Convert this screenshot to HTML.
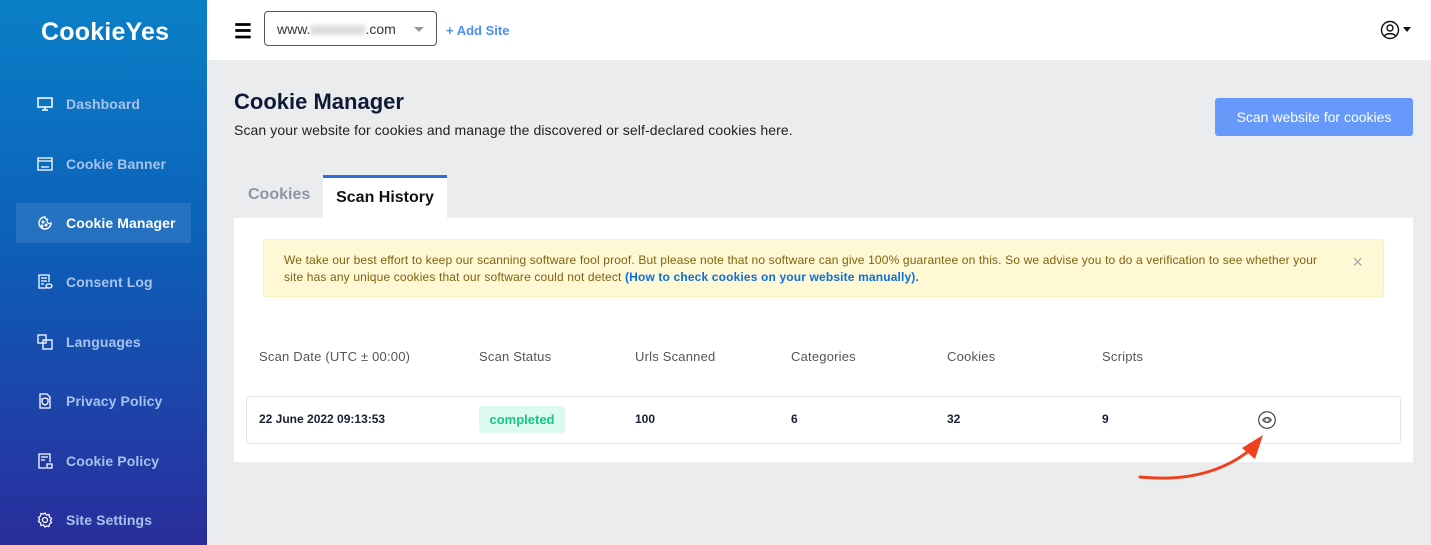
<!DOCTYPE html>
<html><head><meta charset="utf-8"><style>
*{box-sizing:border-box;margin:0;padding:0}
body{width:1431px;height:545px;overflow:hidden;font-family:"Liberation Sans",sans-serif;background:#ebecee;position:relative}
.sb{position:absolute;left:0;top:0;width:207px;height:545px;background:linear-gradient(180deg,#0a80c7 0%,#0d5fb8 45%,#2a2d9c 100%)}
.logo{position:absolute;left:41px;top:18px;color:#fff;font-weight:bold;font-size:25px;letter-spacing:0.2px}
.nav{position:absolute;left:37px;font-size:14px;color:#a6c3ee;display:flex;align-items:center;height:20px;font-weight:bold;letter-spacing:0.1px}
.nav svg{width:16px;height:16px;margin-right:13px}
.act{position:absolute;left:16px;top:203px;width:175px;height:40px;background:rgba(255,255,255,.1)}
.hdr{position:absolute;left:207px;top:0;right:0;height:60px;background:#fff}
.sel{position:absolute;left:264px;top:11px;width:173px;height:35px;border:1px solid #555;border-radius:4px;font-size:14px;color:#333;padding:9px 0 0 12px}
.blur{display:inline-block;width:55px;height:10px;background:#ddd;vertical-align:middle;filter:blur(2px)}
.t{position:absolute;white-space:nowrap}
.card{position:absolute;left:234px;top:218px;width:1179px;height:244px;background:#fff}
.tab{position:absolute;left:323px;top:175px;width:124px;height:43px;background:#fff;border-top:3px solid #2f6de1;font-size:16px;color:#111;text-align:center;padding-top:11px;font-weight:bold}
.alert{position:absolute;left:263px;top:239px;width:1121px;height:58px;background:#fff8d4;border:1px solid #fcefb8;border-radius:3px;font-size:12px;color:#7e6310;padding:12px 0 0 20px;line-height:17px;letter-spacing:0.15px}
.th{font-size:13px;color:#555;top:349px;letter-spacing:0.2px}
.row{position:absolute;left:246px;top:396px;width:1155px;height:48px;border:1px solid #e6e6e6;border-radius:4px}
.td{font-size:12px;font-weight:bold;color:#1a1f36;top:412px}
</style></head><body>
<div class="sb">
<div class="logo">CookieYes</div>
<div class="act"></div>
<div class="nav" style="top:94px"><svg viewBox="0 0 16 16" fill="none" stroke="#fff" stroke-width="1.5"><rect x="1" y="2" width="14" height="9"/><path d="M5 14h6M8 11v3"/></svg>Dashboard</div>
<div class="nav" style="top:154px"><svg viewBox="0 0 16 16" fill="none" stroke="#fff" stroke-width="1.3"><rect x="1" y="2" width="14" height="12"/><path d="M1 5h14M4 11h8"/></svg>Cookie Banner</div>
<div class="nav" style="top:213px;color:#fff"><svg viewBox="0 0 16 16" fill="none" stroke="#fff" stroke-width="1.4"><path d="M14 8a6 6 0 1 1-6-6 2 2 0 0 0 3 2 2 2 0 0 0 3 4z"/><circle cx="6" cy="7" r=".8" fill="#fff"/><circle cx="9" cy="10" r=".8" fill="#fff"/><circle cx="5" cy="11" r=".8" fill="#fff"/></svg>Cookie Manager</div>
<div class="nav" style="top:272px"><svg viewBox="0 0 16 16" fill="none" stroke="#fff" stroke-width="1.3"><path d="M10 14H2V1h10v7M4 4h6M4 7h6M4 10h3"/><ellipse cx="12" cy="12" rx="3" ry="2"/></svg>Consent Log</div>
<div class="nav" style="top:332px"><svg viewBox="0 0 16 16" fill="none" stroke="#fff" stroke-width="1.3"><rect x="1" y="1" width="8" height="8"/><rect x="6" y="6" width="9" height="9"/></svg>Languages</div>
<div class="nav" style="top:391px"><svg viewBox="0 0 16 16" fill="none" stroke="#fff" stroke-width="1.3"><path d="M3 1h7l3 3v11H3z"/><path d="M8 5l3 1v3c0 2-3 3-3 3s-3-1-3-3V6z"/></svg>Privacy Policy</div>
<div class="nav" style="top:451px"><svg viewBox="0 0 16 16" fill="none" stroke="#fff" stroke-width="1.3"><path d="M9 15H2V1h11v8M4 4h7M4 7h4"/><rect x="10" y="11" width="5" height="4"/></svg>Cookie Policy</div>
<div class="nav" style="top:510px"><svg viewBox="0 0 16 16" fill="none" stroke="#fff" stroke-width="1.3"><circle cx="8" cy="8" r="2.5"/><path d="M8 1l1.5 2 2.5-.5.5 2.5 2 1.5-1 2 1 2-2 1.5-.5 2.5-2.5-.5L8 15l-1.5-2-2.5.5-.5-2.5-2-1.5 1-2-1-2 2-1.5.5-2.5 2.5.5z"/></svg>Site Settings</div>
</div>
<div class="hdr"></div>
<div class="t" style="left:234px;top:19px;font-size:20px;font-weight:bold;color:#000">&#9776;</div>
<div class="sel">www.<span class="blur"></span>.com<span style="position:absolute;right:12px;top:15px;border:5px solid transparent;border-top-color:#999"></span></div>
<div class="t" style="left:446px;top:23px;font-size:13px;color:#4d8ff0;font-weight:bold">+ Add Site</div>
<svg style="position:absolute;left:1380px;top:20px" width="20" height="20" viewBox="0 0 20 20" fill="none" stroke="#111" stroke-width="1.4"><circle cx="10" cy="10" r="8.5"/><circle cx="10" cy="8" r="3"/><path d="M4.5 16c1.5-3 9.5-3 11 0"/></svg>
<div style="position:absolute;left:1403px;top:27px;border:4px solid transparent;border-top:5px solid #111"></div>
<div class="t" style="left:234px;top:89px;font-size:22px;font-weight:bold;color:#0e1a36">Cookie Manager</div>
<div class="t" style="left:234px;top:122px;font-size:14px;color:#222;letter-spacing:0.1px">Scan your website for cookies and manage the discovered or self-declared cookies here.</div>
<div class="t" style="left:1215px;top:98px;width:198px;height:38px;background:#6699fa;border-radius:3px;color:#fff;font-size:14px;text-align:center;line-height:38px">Scan website for cookies</div>
<div class="t" style="left:248px;top:186px;font-size:16px;color:#8e96a3;font-weight:bold">Cookies</div>
<div class="card"></div>
<div class="tab">Scan History</div>
<div class="alert">We take our best effort to keep our scanning software fool proof. But please note that no software can give 100% guarantee on this. So we advise you to do a verification to see whether your<br>site has any unique cookies that our software could not detect <span style="color:#0b6fe0;font-weight:bold">(How to check cookies on your website manually).</span><span style="position:absolute;right:20px;top:14px;font-size:18px;color:#aaa">×</span></div>
<div class="t th" style="left:259px">Scan Date (UTC ± 00:00)</div>
<div class="t th" style="left:479px">Scan Status</div>
<div class="t th" style="left:635px">Urls Scanned</div>
<div class="t th" style="left:791px">Categories</div>
<div class="t th" style="left:947px">Cookies</div>
<div class="t th" style="left:1102px">Scripts</div>
<div class="row"></div>
<div class="t td" style="left:259px">22 June 2022 09:13:53</div>
<div class="t" style="left:479px;top:406px;width:86px;height:27px;background:#dcfaf0;border-radius:3px;color:#14c784;font-size:13px;font-weight:bold;text-align:center;line-height:27px">completed</div>
<div class="t td" style="left:635px">100</div>
<div class="t td" style="left:791px">6</div>
<div class="t td" style="left:947px">32</div>
<div class="t td" style="left:1102px">9</div>
<svg style="position:absolute;left:1258px;top:411px" width="18" height="18" viewBox="0 0 18 18" fill="none" stroke="#222" stroke-width="1"><circle cx="9" cy="9" r="8.3"/><path d="M4.5 9c2.5-3.5 6.5-3.5 9 0-2.5 3.5-6.5 3.5-9 0z" fill="#888" stroke="#555"/><circle cx="9" cy="9" r="1.3" fill="#fff" stroke="none"/></svg>
<svg style="position:absolute;left:1130px;top:430px" width="140" height="60" viewBox="0 0 140 60" fill="none"><path d="M10 47C60 52 95 40 120 20" stroke="#f0401e" stroke-width="3" stroke-linecap="round"/><path d="M133 5L112 18l13 11z" fill="#f0401e"/></svg>
</body></html>
